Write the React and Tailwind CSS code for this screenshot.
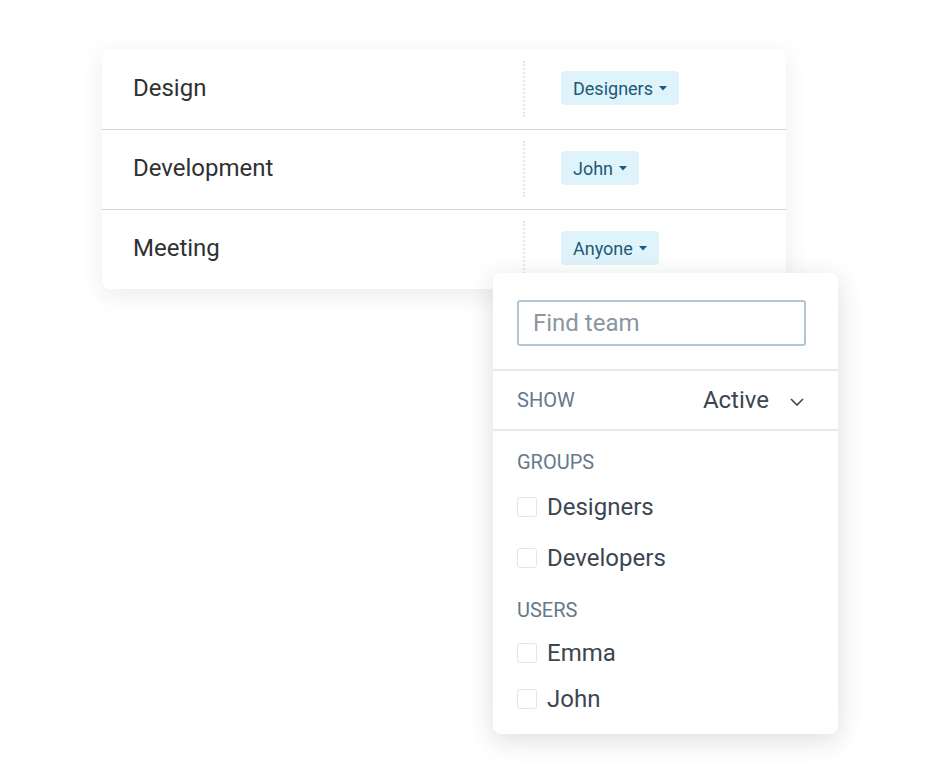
import React from "react";

function Caret() {
  return (
    <svg width="8" height="5" viewBox="0 0 8 5" className="ml-[6px] mt-[1px]">
      <path d="M0 0 L8 0 L4 4.5 Z" fill="#1b5a78" />
    </svg>
  );
}

function Badge({ label }) {
  return (
    <div className="mb-[3px] flex h-[34px] items-center rounded-[4px] bg-[#dff3fb] px-3 text-[18px] text-[#1b5a78]">
      <span>{label}</span>
      <Caret />
    </div>
  );
}

function Row({ title, badge, last }) {
  return (
    <div className={`flex items-center ${last ? "h-[79px]" : "h-[80px] border-b border-[#cfd6dd]"}`}>
      <div className="mb-[3px] w-[421px] pl-[31px] text-[24px] text-[#2f3133]">{title}</div>
      <div className="mb-[2px] h-[56px] border-l-2 border-dotted border-[#e3e6e9]" />
      <div className="pl-[36px]">
        <Badge label={badge} />
      </div>
    </div>
  );
}

function Check({ label, h }) {
  return (
    <div className={`flex items-center ${h}`}>
      <div className="h-[20px] w-[20px] rounded-[3px] border border-[#dfe6ed] bg-white" />
      <span className="ml-[10px] text-[24px] text-[#3b4651]">{label}</span>
    </div>
  );
}

export default function App() {
  return (
    <div
      className="relative h-[783px] w-[940px] overflow-hidden bg-white"
      style={{ fontFamily: "Roboto, 'Liberation Sans', sans-serif" }}
    >
      <div className="ml-[102px] mt-[49px] w-[684px] overflow-hidden rounded-[8px] bg-white pt-px shadow-[0_6px_24px_rgba(30,40,60,0.09)]">
        <Row title="Design" badge="Designers" />
        <Row title="Development" badge="John" />
        <Row title="Meeting" badge="Anyone" last />
      </div>

      <div className="absolute left-[493px] top-[273px] w-[345px] rounded-[8px] bg-white shadow-[0_6px_26px_rgba(30,45,60,0.16)]">
        <div className="px-6 pb-[23px] pt-[27px]">
          <div className="flex h-[46px] w-[289px] items-center rounded-[3px] border-2 border-[#b3c5d1] pl-[14px] text-[24px] text-[#8a969f]">
            Find team
          </div>
        </div>
        <div className="flex h-[62px] items-center border-y-2 border-[#e2eaf0] pl-6 pr-[34px]">
          <span className="text-[20px] text-[#66798a]">SHOW</span>
          <span className="ml-auto text-[24px] text-[#3b4651]">Active</span>
          <svg width="14" height="8" viewBox="0 0 14 8" className="ml-[21px] mt-[3px]">
            <path d="M1 1 L7 7 L13 1" fill="none" stroke="#3b4651" strokeWidth="1.6" />
          </svg>
        </div>
        <div className="px-6 pb-[12px] pt-[17px]">
          <div className="flex h-[28px] items-center text-[20px] text-[#66798a]">GROUPS</div>
          <div className="mt-[6px]">
            <Check label="Designers" h="h-[50px]" />
            <Check label="Developers" h="h-[51px]" />
          </div>
          <div className="mt-[13px] flex h-[28px] items-center text-[20px] text-[#66798a]">USERS</div>
          <div className="mt-[6px]">
            <Check label="Emma" h="h-[46px]" />
            <Check label="John" h="h-[46px]" />
          </div>
        </div>
      </div>
    </div>
  );
}
